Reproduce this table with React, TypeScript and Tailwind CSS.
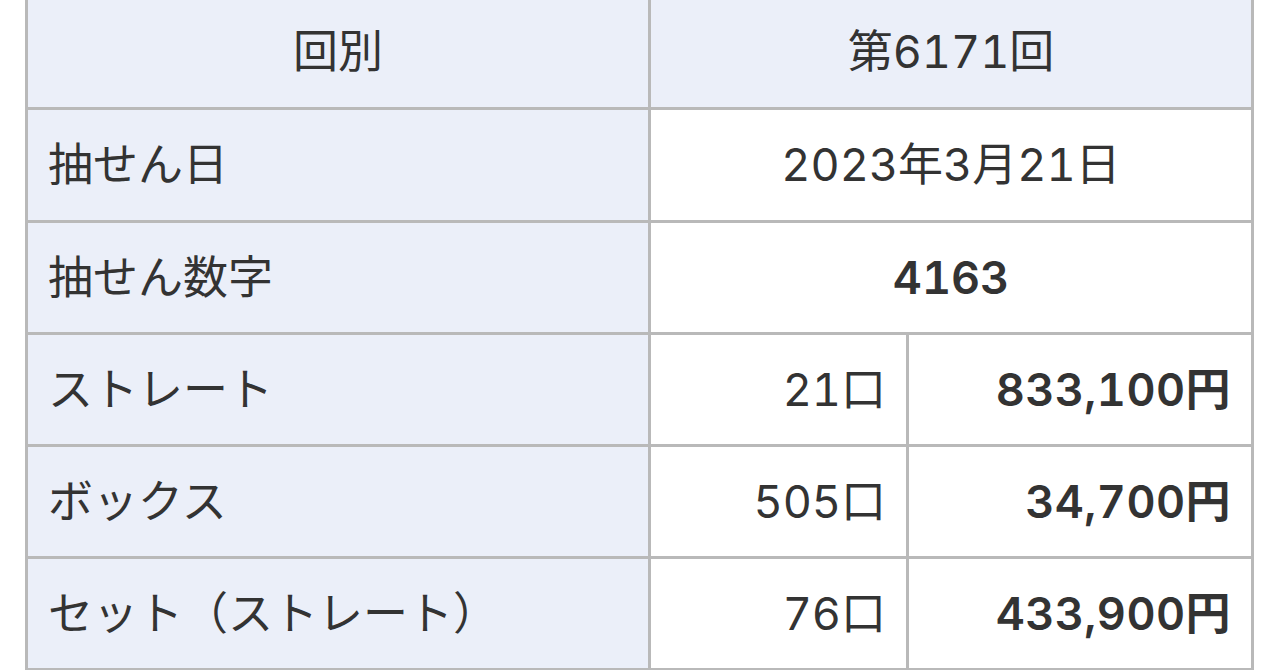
const rows = [
  { label: "ストレート", count: "21口", amount: "833,100円" },
  { label: "ボックス", count: "505口", amount: "34,700円" },
  { label: "セット（ストレート）", count: "76口", amount: "433,900円" },
];

const cell = "border-[3px] border-[#b9b9b9]";
const head = `${cell} bg-[#ebeff9]`;

export default function App() {
  return (
    <div
      className="h-[670px] w-[1280px] overflow-hidden bg-white text-[45px] text-[#333333] tabular-nums"
      style={{ fontFamily: 'Inter, "Noto Sans CJK JP", sans-serif' }}
    >
      <table className="mt-[-7px] ml-[25px] w-[1229px] table-fixed border-collapse">
        <colgroup>
          <col className="w-[623px]" />
          <col className="w-[258px]" />
          <col />
        </colgroup>
        <tbody>
          <tr className="h-[114px]">
            <td className={`${head} text-center font-normal`}>回別</td>
            <td className={`${head} text-center`} colSpan={2}>
              第6171回
            </td>
          </tr>
          <tr className="h-[113px]">
            <td className={`${head} px-[20px]`}>抽せん日</td>
            <td className={`${cell} text-center`} colSpan={2}>
              2023年3月21日
            </td>
          </tr>
          <tr className="h-[112px]">
            <td className={`${head} px-[20px]`}>抽せん数字</td>
            <td className={`${cell} text-center font-semibold`} colSpan={2}>
              4163
            </td>
          </tr>
          {rows.map((r) => (
            <tr key={r.label} className="h-[112px]">
              <td className={`${head} px-[20px]`}>{r.label}</td>
              <td className={`${cell} px-[20px] text-right`}>{r.count}</td>
              <td className={`${cell} px-[20px] text-right font-semibold tracking-[0.01em]`}>
                {r.amount}
              </td>
            </tr>
          ))}
        </tbody>
      </table>
    </div>
  );
}
